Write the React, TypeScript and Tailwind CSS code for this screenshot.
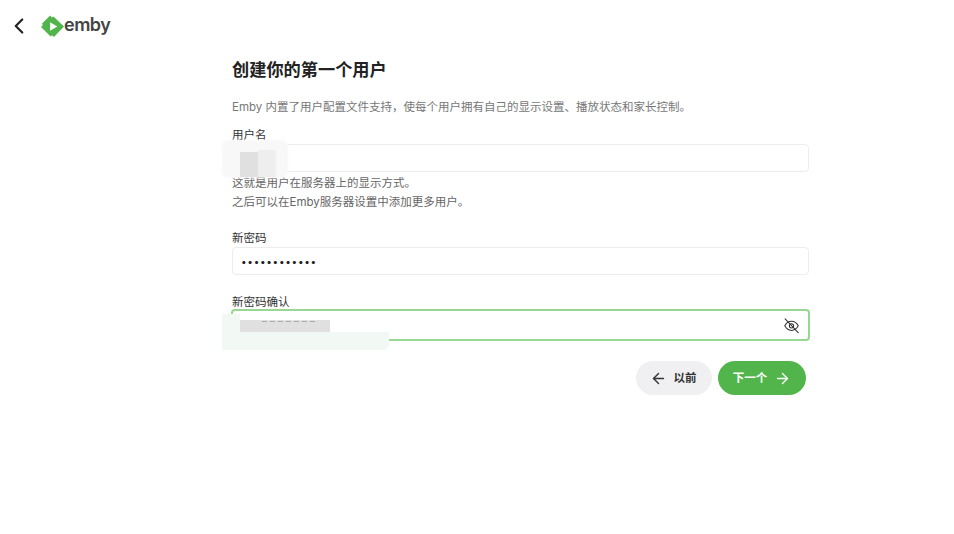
import { ArrowLeft, ArrowRight, ChevronLeft } from 'lucide-react';

const font = { fontFamily: '"Inter", "Noto Sans CJK SC", sans-serif' };

function EmbyLogo() {
  return (
    <div className="flex items-center">
      <svg width="23" height="23" viewBox="0 0 24 24">
        <path d="M9.500 0.500 L11.500 2.500 L13 1.500 L24 12 L13.500 23 L11.500 21 L10 22.500 L0 12.500 L2 10.500 L1 9 Z" fill="#52b54b" />
        <path d="M9.500 7.500 L17 12 L9.500 16.500 Z" fill="#fff" />
      </svg>
      <span className="text-[18px] font-semibold leading-none tracking-[-0.5px] text-[#444] -mt-[3px]">emby</span>
    </div>
  );
}

function EyeSlash() {
  return (
    <svg width="17" height="17" viewBox="0 0 24 24" fill="none" stroke="#333" strokeWidth="1.500" strokeLinecap="round" strokeLinejoin="round">
      <path d="M2.500 12.500 C5 7.500 8.500 6 12 6 C15.500 6 19 7.500 21.500 12.500 C19 17 15.500 19 12 19 C8.500 19 5 17 2.500 12.500 Z" />
      <circle cx="12" cy="12.500" r="3" />
      <path d="M3 2.500 L21.500 22" />
    </svg>
  );
}

function Hint({ children }: { children: React.ReactNode }) {
  return <p className="text-[11.5px] leading-[19px] text-[#666]">{children}</p>;
}

export default function App() {
  return (
    <div className="relative min-h-[534px] bg-white overflow-hidden" style={font}>
      <header className="flex items-center h-[52px] pl-[6px]">
        <ChevronLeft size={26} strokeWidth={2} className="text-[#222]" />
        <div className="ml-[9px]">
          <EmbyLogo />
        </div>
      </header>

      <main className="ml-[232px] w-[577px]">
        <h1 className="mt-[8px] text-[17.2px] font-bold leading-[20px] text-[#222]">创建你的第一个用户</h1>
        <p className="mt-[19px] text-[11.5px] leading-[16px] text-[#777]">
          Emby 内置了用户配置文件支持，使每个用户拥有自己的显示设置、播放状态和家长控制。
        </p>

        <label className="block mt-[13px] text-[11.5px] leading-[14px] text-[#333]">用户名</label>
        <div className="mt-[2px] h-[28px] rounded-[4px] border border-[#ececec]" />
        <div className="mt-[2px]">
          <Hint>这就是用户在服务器上的显示方式。</Hint>
          <Hint>之后可以在Emby服务器设置中添加更多用户。</Hint>
        </div>

        <label className="block mt-[19px] text-[11.5px] leading-[14px] text-[#333]">新密码</label>
        <div className="mt-[2px] h-[28px] rounded-[4px] border border-[#ececec] flex items-center pl-[8px] text-[#222] text-[10px] tracking-[0.7px]">
          ••••••••••••
        </div>

        <label className="block mt-[20px] text-[11.5px] leading-[14px] text-[#333]">新密码确认</label>
        <div className="ml-[-1px] w-[579px] h-[32px] rounded-[4px] border-2 border-[#97d793] flex items-center justify-end pr-[8px]">
          <EyeSlash />
        </div>

        <div className="mt-[20px] flex justify-end gap-[6px] pr-[3px]">
          <button className="h-[34px] w-[76px] rounded-full bg-[#f0f0f3] flex items-center justify-center gap-[7px] pr-[2px] text-[11.5px] font-bold text-[#333]">
            <ArrowLeft size={17} strokeWidth={2} />
            <span className="pt-px">以前</span>
          </button>
          <button className="h-[34px] w-[88px] rounded-full bg-[#52b54b] flex items-center justify-center gap-[7px] text-[11.5px] font-bold text-white">
            <span className="pt-px">下一个</span>
            <ArrowRight size={17} strokeWidth={2} />
          </button>
        </div>
      </main>

      {/* blurred patches over the username and the confirm field */}
      <div className="absolute left-[222px] top-[140px] w-[66px] h-[38px] bg-[#f8f8f8] rounded-[6px] blur-[1px]" />
      <div className="absolute left-[258px] top-[150px] w-[18px] h-[27px] bg-[#eeeeee]" />
      <div className="absolute left-[240px] top-[152px] w-[18px] h-[25px] bg-[#e0e0e0]" />
      <div className="absolute left-[222px] top-[314px] w-[18px] h-[36px] bg-[#f2f8f3]" />
      <div className="absolute left-[222px] top-[332px] w-[167px] h-[18px] bg-[#f2f8f3] rounded-br-[6px]" />
      <div className="absolute left-[240px] top-[320px] w-[90px] h-[12px] bg-[#e0e0e0]" />
      <div className="absolute left-[262px] top-[321px] flex gap-[3px]">
        {[0, 1, 2, 3, 4, 5, 6].map(i => (
          <span key={i} className="w-[5px] h-[1px] bg-[#aaa]" />
        ))}
      </div>
    </div>
  );
}
